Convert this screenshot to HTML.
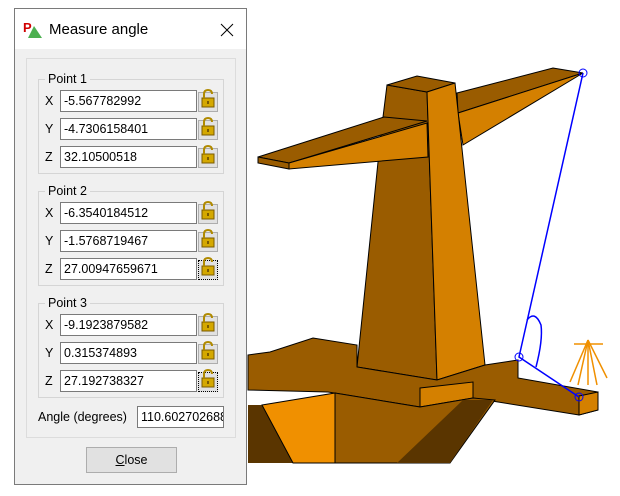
<!DOCTYPE html>
<html><head><style>
body{margin:0;width:620px;height:496px;background:#fff;position:relative;overflow:hidden;font-family:"Liberation Sans",sans-serif;font-size:12px;color:#000}
.a{position:absolute}
.dlg{left:14px;top:8px;width:233px;height:477px;background:#f0f0f0;border:1px solid #7a7a7a;box-sizing:border-box}
.tb{left:0;top:0;width:231px;height:40px;background:#fff}
.panel{left:11px;top:49px;width:210px;height:380px;border:1px solid #dcdcdc;box-sizing:border-box}
.grp{border:1px solid #d5d5d5;box-sizing:border-box}
.gl{background:#f0f0f0;padding:0 3px}
.fld{background:#fff;border:1px solid #7a7a7a;box-sizing:border-box;height:22px;padding:3px 0 0 3px;font-size:12.5px;white-space:nowrap;overflow:hidden}
.lk{width:20px;height:20px;background:#e1e1e1;border:1px solid #adadad;box-sizing:border-box}
.lbl{font-size:12.5px}
</style></head><body>
<svg class="a" style="left:0;top:0" width="620" height="496">
<polygon points="457,93 553,68 583,73 458,113" fill="#9a5c00" stroke="#000"/>
<polygon points="458,113 583,73 463,145" fill="#d48000" stroke="#000"/>
<polygon points="387,85 427,92 437,380 357,367 378,162 383,117" fill="#9a5c00" stroke="#000"/>
<polygon points="387,85 417,76 455,83 427,92" fill="#9a5c00" stroke="#000"/>
<polygon points="258,157 384,117 427,121 289,163" fill="#9a5c00" stroke="#000"/>
<polygon points="289,163 427,123 428,157 289,169" fill="#d48000" stroke="#000"/>
<polygon points="258,157 289,163 289,169 258,163" fill="#9a5c00" stroke="#000"/>
<polygon points="427,92 455,83 485,365 437,380" fill="#d48000" stroke="#000"/>
<polygon points="248,355 270,352 313,338 357,345 357,367 437,380 485,365 518,360 518,378 598,392 598,410 579,415 473,398 420,407 328,392 248,390" fill="#9a5c00" stroke="#000"/>
<polygon points="420,388 473,382 473,398 420,407" fill="#d48000" stroke="#000"/>
<polygon points="579,396 598,392 598,410 579,415" fill="#d48000" stroke="#000"/>
<polygon points="248,405 262,405 293,463 248,463" fill="#5a3500"/>
<polygon points="262,405 335,393 335,463 293,463" fill="#f09000" stroke="#000"/>
<polygon points="335,393 420,407 473,398 495,400 450,463 335,463" fill="#9a5c00" stroke="#000"/>
<polygon points="463,400 493,400 450,463 397,463" fill="#5a3500"/>
<g stroke="#0000ff" fill="none" stroke-width="1.5">
<polyline points="583,73 519,357 579,397"/>
<path d="M527,320 Q535,310 541,325 Q543,340 536,367"/>
<circle cx="583" cy="73" r="4" stroke-width="1"/><circle cx="519" cy="357" r="4" stroke-width="1"/><circle cx="579" cy="397" r="4" stroke-width="1"/>
</g>
<g stroke="#f09000" stroke-width="1.5">
<line x1="574" y1="344" x2="603" y2="344"/><line x1="588" y1="340" x2="570" y2="382"/><line x1="588" y1="340" x2="578" y2="385"/><line x1="588" y1="340" x2="588" y2="385"/><line x1="588" y1="340" x2="597" y2="385"/><line x1="588" y1="340" x2="607" y2="378"/>
</g>
</svg>
<div class="a dlg">
 <div class="a tb"></div>
 <svg class="a" style="left:8px;top:11px" width="20" height="20"><text x="0" y="12" font-size="13" font-weight="bold" fill="#d00000" font-family="Liberation Sans">P</text><polygon points="5,18 11,6 19,18" fill="#4cb050"/></svg>
 <div class="a" style="left:34px;top:12px;font-size:15px">Measure angle</div>
 <svg class="a" style="left:205px;top:14px" width="14" height="14"><path d="M1,1 L13,13 M13,1 L1,13" stroke="#000" stroke-width="1"/></svg>
 <div class="a panel"></div>
</div>
<div class="a grp" style="left:38px;top:79px;width:186px;height:95px"></div>
<div class="a gl lbl" style="left:45px;top:72px">Point 1</div>
<div class="a grp" style="left:38px;top:191px;width:186px;height:95px"></div>
<div class="a gl lbl" style="left:45px;top:184px">Point 2</div>
<div class="a grp" style="left:38px;top:303px;width:186px;height:95px"></div>
<div class="a gl lbl" style="left:45px;top:296px">Point 3</div>
<div class="a lbl" style="left:45px;top:94px">X</div><div class="a fld" style="left:60px;top:90px;width:137px">-5.567782992</div><div class="a lk" style="left:198px;top:92px"></div>
<div class="a lbl" style="left:45px;top:122px">Y</div><div class="a fld" style="left:60px;top:118px;width:137px">-4.7306158401</div><div class="a lk" style="left:198px;top:120px"></div>
<div class="a lbl" style="left:45px;top:150px">Z</div><div class="a fld" style="left:60px;top:146px;width:137px">32.10500518</div><div class="a lk" style="left:198px;top:148px"></div>
<div class="a lbl" style="left:45px;top:206px">X</div><div class="a fld" style="left:60px;top:202px;width:137px">-6.3540184512</div><div class="a lk" style="left:198px;top:204px"></div>
<div class="a lbl" style="left:45px;top:234px">Y</div><div class="a fld" style="left:60px;top:230px;width:137px">-1.5768719467</div><div class="a lk" style="left:198px;top:232px"></div>
<div class="a lbl" style="left:45px;top:262px">Z</div><div class="a fld" style="left:60px;top:258px;width:137px">27.00947659671</div><div class="a lk" style="left:198px;top:260px;border:1px dotted #000"></div>
<div class="a lbl" style="left:45px;top:318px">X</div><div class="a fld" style="left:60px;top:314px;width:137px">-9.1923879582</div><div class="a lk" style="left:198px;top:316px"></div>
<div class="a lbl" style="left:45px;top:346px">Y</div><div class="a fld" style="left:60px;top:342px;width:137px">0.315374893</div><div class="a lk" style="left:198px;top:344px"></div>
<div class="a lbl" style="left:45px;top:374px">Z</div><div class="a fld" style="left:60px;top:370px;width:137px">27.192738327</div><div class="a lk" style="left:198px;top:372px;border:1px dotted #000"></div>
<div class="a lbl" style="left:38px;top:410px">Angle (degrees)</div><div class="a fld" style="left:137px;top:406px;width:87px">110.602702688</div>
<div class="a" style="left:86px;top:447px;width:91px;height:26px;background:#e1e1e1;border:1px solid #adadad;box-sizing:border-box;text-align:center;line-height:24px;font-size:12.5px"><u>C</u>lose</div>
<svg class="a" style="left:0;top:0" width="620" height="496">
<g id="L">
<rect x="202" y="98" width="12" height="9" fill="#d4a800" stroke="#7a5a00"/><path d="M204,98 V94 Q204,90 208,90 Q212,90 212,94" fill="none" stroke="#b08a00" stroke-width="2"/><rect x="207" y="101" width="2" height="3" fill="#7a5a00"/>
</g>
<use href="#L" y="28"/><use href="#L" y="56"/><use href="#L" y="112"/><use href="#L" y="140"/><use href="#L" y="168"/><use href="#L" y="224"/><use href="#L" y="252"/><use href="#L" y="280"/>
</svg>
</body></html>
